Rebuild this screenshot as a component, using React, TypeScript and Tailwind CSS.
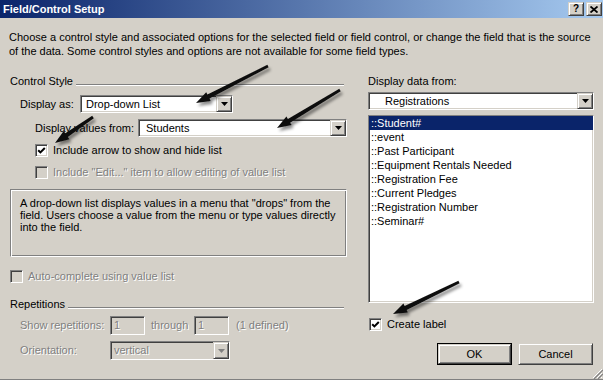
import React from "react";

const sunken =
  "border border-t-[#808080] border-l-[#808080] border-b-white border-r-white shadow-[inset_1px_1px_0_#404040,inset_-1px_-1px_0_#d4d0c8]";
const raised =
  "border border-t-[#d4d0c8] border-l-[#d4d0c8] border-b-[#404040] border-r-[#404040] shadow-[inset_1px_1px_0_#fff,inset_-1px_-1px_0_#808080]";
const disabledText = "text-[#808080] [text-shadow:1px_1px_0_#fff]";

function DropArrow({ disabled = false }: { disabled?: boolean }) {
  return (
    <svg width="7" height="4" viewBox="0 0 7 4">
      <path d="M0 0 H7 L3.5 4 Z" fill={disabled ? "#808080" : "#000"} />
    </svg>
  );
}

function Combo({
  text,
  className,
  textPad,
  disabled = false,
}: {
  text: string;
  className: string;
  textPad: string;
  disabled?: boolean;
}) {
  return (
    <div className={`${sunken} ${disabled ? "bg-[#d4d0c8]" : "bg-white"} flex items-stretch ${className}`}>
      <div className={`flex-1 flex items-center ${textPad} ${disabled ? disabledText : "text-black"}`}>{text}</div>
      <div className={`${raised} bg-[#d4d0c8] w-[16px] flex items-center justify-center`}>
        <DropArrow disabled={disabled} />
      </div>
    </div>
  );
}

function CheckBox({ checked = false, disabled = false }: { checked?: boolean; disabled?: boolean }) {
  return (
    <div
      className={`${sunken} ${disabled ? "bg-[#d4d0c8]" : "bg-white"} w-[13px] h-[13px] shrink-0 flex items-center justify-center`}
    >
      {checked && (
        <svg width="9" height="9" viewBox="0 0 9 9">
          <path d="M1.2 4.2 L3.4 6.4 L7.8 2" stroke="#000" strokeWidth="2" fill="none" />
        </svg>
      )}
    </div>
  );
}

function GroupHeader({ title }: { title: string }) {
  return (
    <div className="flex items-center h-[14px] pr-[3px]">
      <span className="text-black pr-[3px]">{title}</span>
      <div className="flex-1 mt-[7px] border-t border-t-[#808080] border-b border-b-white" />
    </div>
  );
}

type Pt = [number, number];
function arrowPoints(tail: Pt, head: Pt) {
  const dx = head[0] - tail[0];
  const dy = head[1] - tail[1];
  const len = Math.hypot(dx, dy);
  const ux = dx / len;
  const uy = dy / len;
  const nx = -uy;
  const ny = ux;
  const hl = 14;
  const hw = 5;
  const w0 = 1.4;
  const w1 = 2.2;
  const bx = head[0] - ux * hl;
  const by = head[1] - uy * hl;
  const pts: Pt[] = [
    [tail[0] + nx * w0, tail[1] + ny * w0],
    [bx + nx * w1, by + ny * w1],
    [bx + nx * hw, by + ny * hw],
    [head[0], head[1]],
    [bx - nx * hw, by - ny * hw],
    [bx - nx * w1, by - ny * w1],
    [tail[0] - nx * w0, tail[1] - ny * w0],
  ];
  return pts.map((p) => `${p[0].toFixed(1)},${p[1].toFixed(1)}`).join(" ");
}

const arrows: [Pt, Pt][] = [
  [[268, 66], [196, 103]],
  [[340, 90], [277, 128]],
  [[93, 117], [55, 143]],
  [[459, 282], [393, 314]],
];

const fields = [
  "::Student#",
  "::event",
  "::Past Participant",
  "::Equipment Rentals Needed",
  "::Registration Fee",
  "::Current Pledges",
  "::Registration Number",
  "::Seminar#",
];

export default function App() {
  return (
    <div className="relative w-[603px] h-[380px] overflow-hidden bg-[#d4d0c8] font-['Liberation_Sans',Arial,sans-serif] text-[11px] leading-[13px] text-black border-b border-b-[#808080]">
      {/* Title bar */}
      <div className="h-[18px] flex items-center pl-[3px] pr-[1px] bg-[linear-gradient(to_right,#0a246a,#a6caf0)]">
        <span className="flex-1 text-white font-bold text-[11px]">Field/Control Setup</span>
        <div className="flex gap-[2px]">
          <div className={`${raised} bg-[#d4d0c8] w-[16px] h-[14px] flex items-center justify-center text-[10px] font-bold leading-none`}>
            ?
          </div>
          <div className={`${raised} bg-[#d4d0c8] w-[16px] h-[14px] flex items-center justify-center`}>
            <svg width="8" height="7" viewBox="0 0 8 7">
              <path d="M0.5 0.5 L7.5 6.5 M7.5 0.5 L0.5 6.5" stroke="#000" strokeWidth="1.8" />
            </svg>
          </div>
        </div>
      </div>

      {/* Body */}
      <div className="pl-[9px] pr-[9px]">
        <p className="mt-[12px] leading-[14px] whitespace-nowrap">
          Choose a control style and associated options for the selected field or field control, or change the field that is the source
          <br />
          of the data. Some control styles and options are not available for some field types.
        </p>

        <div className="mt-[16px] flex gap-[21px] pl-[1px]">
          {/* Left column */}
          <div className="w-[337px] flex flex-col">
            <GroupHeader title="Control Style" />

            <div className="mt-[7px] flex items-center h-[18px] pl-[10px]">
              <span className="w-[60px]">Display as:</span>
              <Combo text="Drop-down List" className="w-[153px] h-[18px]" textPad="pl-[5px]" />
            </div>

            <div className="mt-[6px] flex items-center h-[18px] pl-[25px]">
              <span className="w-[103px]">Display values from:</span>
              <Combo text="Students" className="flex-1 h-[18px]" textPad="pl-[7px]" />
            </div>

            <div className="mt-[7px] flex items-center h-[13px] pl-[25px] gap-[5px]">
              <CheckBox checked />
              <span>Include arrow to show and hide list</span>
            </div>

            <div className="mt-[9px] flex items-center h-[13px] pl-[25px] gap-[5px]">
              <CheckBox disabled />
              <span className={disabledText}>Include "Edit..." item to allow editing of value list</span>
            </div>

            <div className="mt-[10px] h-[68px] border border-t-[#808080] border-l-[#808080] border-b-white border-r-white shadow-[inset_1px_1px_0_#fff,inset_-1px_-1px_0_#808080] pl-[9px] pt-[7px] leading-[12px]">
              A drop-down list displays values in a menu that "drops" from the
              <br />
              field. Users choose a value from the menu or type values directly
              <br />
              into the field.
            </div>

            <div className="mt-[13px] flex items-center h-[13px] gap-[5px]">
              <CheckBox disabled />
              <span className={disabledText}>Auto-complete using value list</span>
            </div>

            <div className="mt-[14px]">
              <GroupHeader title="Repetitions" />
            </div>

            <div className="mt-[5px] flex items-center h-[19px] pl-[10px]">
              <span className={`w-[90px] ${disabledText}`}>Show repetitions:</span>
              <div className={`${sunken} bg-[#d4d0c8] w-[35px] h-[19px] flex items-center pl-[3px] ${disabledText}`}>1</div>
              <span className={`w-[49px] pl-[6px] ${disabledText}`}>through</span>
              <div className={`${sunken} bg-[#d4d0c8] w-[35px] h-[19px] flex items-center pl-[3px] ${disabledText}`}>1</div>
              <span className={`pl-[7px] ${disabledText}`}>(1 defined)</span>
            </div>

            <div className="mt-[6px] flex items-center h-[19px] pl-[10px]">
              <span className={`w-[90px] ${disabledText}`}>Orientation:</span>
              <Combo text="vertical" className="w-[120px] h-[19px]" textPad="pl-[3px]" disabled />
            </div>
          </div>

          {/* Right column */}
          <div className="w-[226px] flex flex-col">
            <div className="h-[14px] flex items-center">Display data from:</div>
            <Combo text="Registrations" className="mt-[4px] h-[18px]" textPad="pl-[16px]" />
            <div className={`${sunken} bg-white mt-[5px] h-[188px] flex flex-col`}>
              {fields.map((f, i) => (
                <div
                  key={f}
                  className={`h-[14px] flex items-center pl-[2px] ${i === 0 ? "bg-[#0a246a] text-white" : "text-black"}`}
                >
                  {f}
                </div>
              ))}
            </div>
            <div className="mt-[15px] flex items-center h-[13px] pl-[1px] gap-[5px]">
              <CheckBox checked />
              <span>Create label</span>
            </div>
            <div className="mt-[12px] flex justify-end gap-[6px] pr-[1px]">
              <div className="w-[75px] h-[22px] border border-black">
                <div className={`${raised} bg-[#d4d0c8] w-full h-full flex items-center justify-center`}>OK</div>
              </div>
              <div className={`${raised} bg-[#d4d0c8] w-[75px] h-[22px] flex items-center justify-center`}>Cancel</div>
            </div>
          </div>
        </div>
      </div>

      {/* Resize grip */}
      <svg className="absolute right-0 bottom-0" width="12" height="12" viewBox="0 0 12 12">
        <path d="M11 2 L2 11 M11 6 L6 11 M11 10 L10 11" stroke="#fff" strokeWidth="1" />
        <path d="M12 3 L3 12 M12 7 L7 12" stroke="#808080" strokeWidth="1.2" />
      </svg>

      {/* Annotation arrows */}
      <svg className="absolute inset-0 pointer-events-none" width="603" height="380" viewBox="0 0 603 380">
        <defs>
          <filter id="shadow" x="-20%" y="-20%" width="140%" height="140%">
            <feDropShadow dx="2" dy="3" stdDeviation="1.6" floodColor="#000" floodOpacity="0.45" />
          </filter>
        </defs>
        {arrows.map(([t, h], i) => (
          <polygon key={i} points={arrowPoints(t, h)} fill="#111" filter="url(#shadow)" />
        ))}
      </svg>
    </div>
  );
}
